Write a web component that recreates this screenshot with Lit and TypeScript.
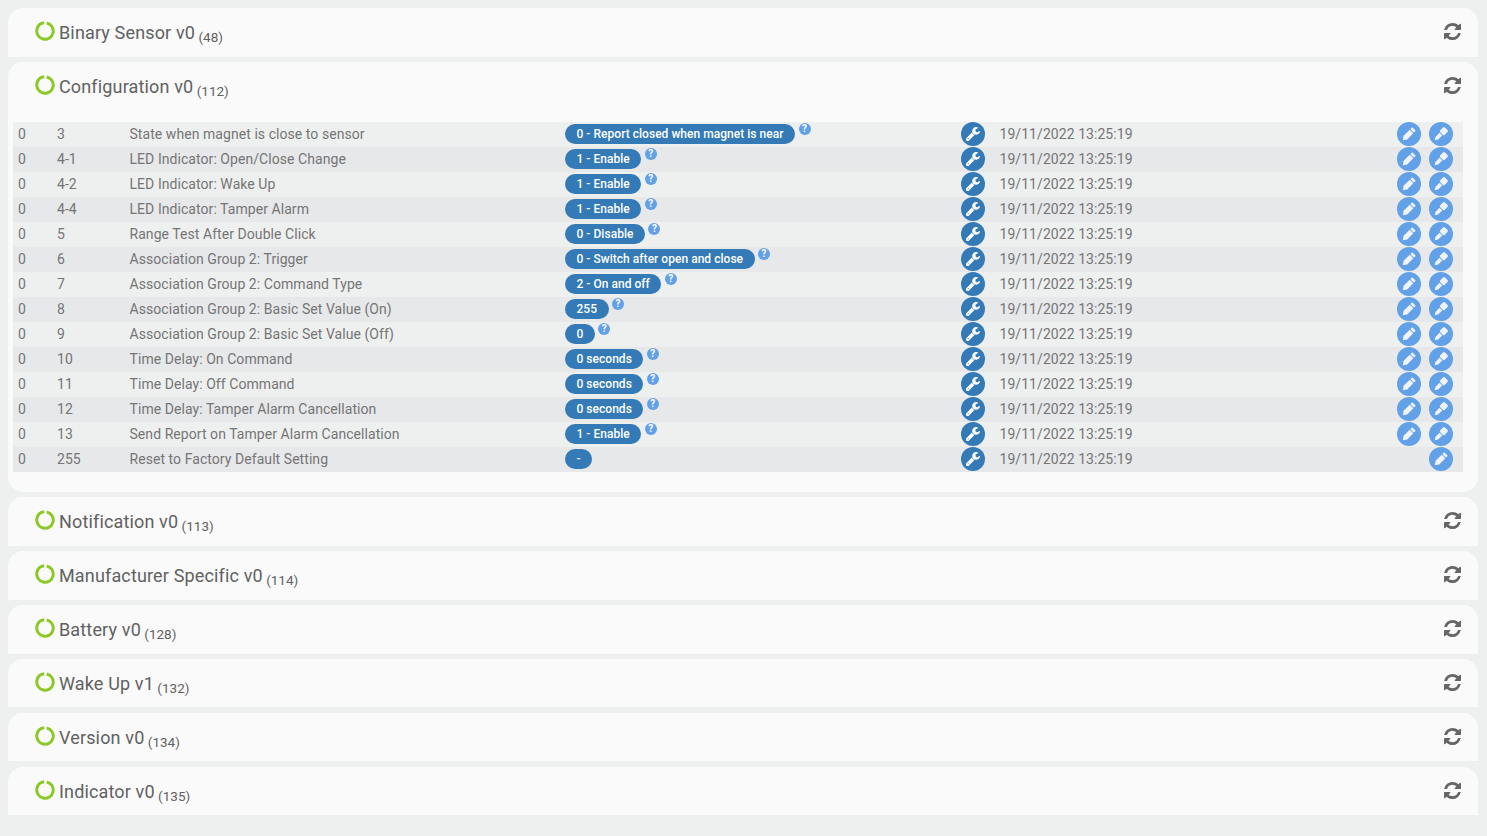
import { LitElement, html, css, svg } from "lit";
import { customElement } from "lit/decorators.js";

const rows: [string, string, string, string][] = [
  ["0", "3", "State when magnet is close to sensor", "0 - Report closed when magnet is near"],
  ["0", "4-1", "LED Indicator: Open/Close Change", "1 - Enable"],
  ["0", "4-2", "LED Indicator: Wake Up", "1 - Enable"],
  ["0", "4-4", "LED Indicator: Tamper Alarm", "1 - Enable"],
  ["0", "5", "Range Test After Double Click", "0 - Disable"],
  ["0", "6", "Association Group 2: Trigger", "0 - Switch after open and close"],
  ["0", "7", "Association Group 2: Command Type", "2 - On and off"],
  ["0", "8", "Association Group 2: Basic Set Value (On)", "255"],
  ["0", "9", "Association Group 2: Basic Set Value (Off)", "0"],
  ["0", "10", "Time Delay: On Command", "0 seconds"],
  ["0", "11", "Time Delay: Off Command", "0 seconds"],
  ["0", "12", "Time Delay: Tamper Alarm Cancellation", "0 seconds"],
  ["0", "13", "Send Report on Tamper Alarm Cancellation", "1 - Enable"],
  ["0", "255", "Reset to Factory Default Setting", "-"],
];

const refreshIcon = svg`<svg class="refresh" viewBox="0 0 1536 1536"><path fill="currentColor" d="M1511 928q0 5-1 7-64 268-268 434.500T764 1536q-146 0-282.500-55T238 1324l-129 129q-19 19-45 19t-45-19-19-45V960q0-26 19-45t45-19h448q26 0 45 19t19 45-19 45l-137 137q71 66 161 102t187 36q134 0 250-65t186-179q11-17 53-117 8-23 30-23h192q13 0 22.500 9.500t9.500 22.500zm25-800v448q0 26-19 45t-45 19h-448q-26 0-45-19t-19-45 19-45l138-138q-148-137-349-137-134 0-250 65T332 500q-11 17-53 117-8 23-30 23H50q-13 0-22.500-9.500T18 608v-7q65-268 270-434.500T768 0q146 0 284 55.500T1297 212l130-129q19-19 45-19t45 19 19 45z"/></svg>`;

const wrench = svg`<svg class="w" viewBox="128 128 1600 1600"><path fill="#fff" fill-rule="evenodd" d="M448 1472q0-26-19-45t-45-19-45 19-19 45 19 45 45 19 45-19 19-45zm644-420l-682 682q-37 37-90 37-52 0-91-37l-106-108q-38-36-38-90 0-53 38-91l681-681q39 98 114.500 173.500t173.500 114.500zm634-435q0 39-23 106-47 134-164.500 217.500t-258.500 83.500q-185 0-316.500-131.500t-131.500-316.500 131.500-316.500 316.500-131.500q58 0 121.500 16.500t107.500 46.500q16 11 16 28t-16 28l-293 169v224l193 111q5-3 79-48.500t135.500-81 70.500-35.500q15 0 23.500 10t8.500 25z"/></svg>`;

const pencil = svg`<svg class="p" viewBox="0 0 24 24"><g fill="#f0f4fa" transform="rotate(45 12 12)"><rect x="8.400" y="1" width="7.200" height="3.800" rx="1.200"></rect><path d="M8.400 6h7.200v12.200L12 23.500l-3.600-5.300z"></path></g></svg>`;

const marker = svg`<svg class="p" viewBox="0 0 24 24"><g fill="#f0f4fa" transform="rotate(45 12 12)"><rect x="7.500" y="0.500" width="9" height="9.500" rx="2"></rect><path d="M9.300 11.200h5.400v8.300L12 23.500l-2.700-4z"></path></g></svg>`;

@customElement("app-root")
export class AppRoot extends LitElement {
  static styles = css`
    :host {
      display: block;
      height: 836px;
      overflow: hidden;
      box-sizing: border-box;
      padding-top: 8px;
      background: #eef0f0;
      font-family: Roboto, "Liberation Sans", sans-serif;
      color: #757575;
    }
    .panel {
      margin: 0 9px 5.4px 8px;
      background: #fafafa;
      border-radius: 15px 15px 0 0;
      height: 48.5px;
      box-sizing: border-box;
      overflow: hidden;
    }
    .panel.open {
      height: 430px;
      border-radius: 15px;
      margin-bottom: 5.4px;
    }
    .head {
      display: flex;
      align-items: flex-start;
      padding: 13px 16px 0 27px;
      height: 37px;
      box-sizing: border-box;
    }
    .ring {
      width: 20px;
      height: 20px;
      flex: none;
    }
    .title {
      margin-left: 4px;
      margin-top: -1px;
      font-size: 18px;
      line-height: 25px;
      letter-spacing: 0.15px;
      color: #616161;
      white-space: nowrap;
    }
    .count {
      font-size: 13.5px;
      letter-spacing: 0;
      color: #616161;
      position: relative;
      top: 3px;
    }
    .spacer {
      flex: 1;
    }
    .refresh {
      width: 17px;
      height: 17px;
      margin: 2px 1px 0 0;
      color: #666;
    }
    .table {
      margin: 23px 15px 0 5px;
    }
    .row {
      display: grid;
      grid-template-columns: 39px 72.5px 435.5px 396px 38.5px 397px 32px 32px 1fr;
      height: 25px;
      align-items: center;
      padding-left: 5px;
      font-size: 14px;
      letter-spacing: 0.06px;
      background: #eef0f0;
    }
    .row:nth-child(even) {
      background: #e7e8ea;
    }
    .value {
      display: flex;
      align-items: flex-start;
      height: 25px;
    }
    .badge {
      margin-top: 2px;
      height: 20px;
      line-height: 20px;
      box-sizing: border-box;
      min-width: 27px;
      padding: 0 11.5px;
      border-radius: 10px;
      background: #337ab7;
      color: #fff;
      font-size: 12px;
      font-weight: 500;
      white-space: nowrap;
      letter-spacing: 0.03px;
    }
    .help {
      margin: 1px 0 0 3.5px;
      width: 12px;
      height: 12px;
      border-radius: 50%;
      background: #62a0e8;
      color: #fff;
      font-size: 10px;
      font-weight: 700;
      line-height: 12px;
      text-align: center;
    }
    .icon {
      width: 24px;
      height: 24px;
      border-radius: 50%;
      display: flex;
      align-items: center;
      justify-content: center;
    }
    .icon svg.w {
      width: 14px;
      height: 14px;
    }
    .icon svg.p {
      width: 17px;
      height: 17px;
    }
    .icon.dark {
      background: #337ab7;
    }
    .icon.light {
      background: #62a0e8;
    }
    .date {
      white-space: nowrap;
    }
  `;

  private head(name: string, count: string) {
    return html`<div class="head">
      <svg class="ring" viewBox="0 0 20 20">
        <circle cx="10" cy="10" r="8.25" fill="none" stroke="#8cc928" stroke-width="3" stroke-dasharray="49 2.800" transform="rotate(-78 10 10)"></circle>
      </svg>
      <span class="title">${name}<span class="count"> (${count})</span></span>
      <span class="spacer"></span>
      ${refreshIcon}
    </div>`;
  }

  render() {
    const closed = (n: string, c: string) => html`<section class="panel">${this.head(n, c)}</section>`;
    return html`
      ${closed("Binary Sensor v0", "48")}
      <section class="panel open">
        ${this.head("Configuration v0", "112")}
        <div class="table">
          ${rows.map(
            (r, i) => html`<div class="row">
              <span>${r[0]}</span><span>${r[1]}</span><span>${r[2]}</span>
              <span class="value"><span class="badge">${r[3]}</span>${i < 13 ? html`<span class="help">?</span>` : ""}</span>
              <span class="icon dark">${wrench}</span>
              <span class="date">19/11/2022 13:25:19</span>
              ${i < 13 ? html`<span class="icon light">${pencil}</span><span class="icon light">${marker}</span>` : html`<span></span><span class="icon light">${pencil}</span>`}
              <span></span>
            </div>`
          )}
        </div>
      </section>
      ${closed("Notification v0", "113")}
      ${closed("Manufacturer Specific v0", "114")}
      ${closed("Battery v0", "128")}
      ${closed("Wake Up v1", "132")}
      ${closed("Version v0", "134")}
      ${closed("Indicator v0", "135")}
    `;
  }
}
